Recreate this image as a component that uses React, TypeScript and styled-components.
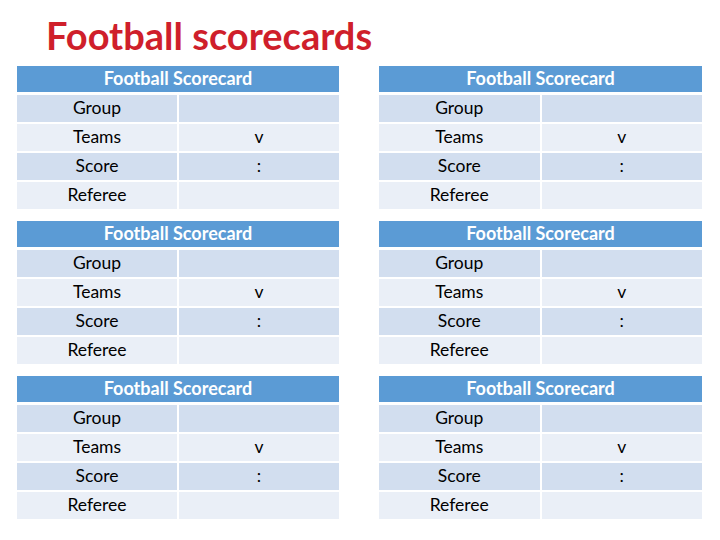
import React from "react";
import styled, { createGlobalStyle } from "styled-components";

const GlobalStyle = createGlobalStyle`
  html, body {
    margin: 0;
    padding: 0;
    background: #ffffff;
  }
  body {
    font-family: Lato, "Open Sans", "Liberation Sans", sans-serif;
    color: #000000;
  }
`;

const Page = styled.div`
  width: 720px;
  height: 540px;
  box-sizing: border-box;
  padding: 15px 0 0 17px;
`;

const Title = styled.h1`
  margin: 0 0 11px 29px;
  font-family: Lato, "Open Sans", sans-serif;
  font-weight: 700;
  font-size: 38px;
  line-height: 40px;
  color: #cf1f2b;
`;

const CardGrid = styled.div`
  display: grid;
  grid-template-columns: 322px 323px;
  column-gap: 40px;
  row-gap: 12px;
`;

const Card = styled.section`
  display: flex;
  flex-direction: column;
  gap: 2px;
`;

const CardHeader = styled.div`
  height: 26px;
  box-sizing: border-box;
  padding-bottom: 2px;
  margin-bottom: 1px;
  background: #5b9bd5;
  color: #ffffff;
  font-weight: 700;
  font-size: 18px;
  display: flex;
  align-items: center;
  justify-content: center;
`;

const Row = styled.div`
  display: grid;
  grid-template-columns: 1fr 1fr;
  column-gap: 2px;
  height: 27px;
`;

const Cell = styled.div<{ $shade: boolean }>`
  background: ${(p) => (p.$shade ? "#d2deef" : "#eaeff7")};
  display: flex;
  align-items: center;
  justify-content: center;
  box-sizing: border-box;
  padding-bottom: 2px;
  font-size: 17.5px;
`;

const rows: [string, string][] = [
  ["Group", ""],
  ["Teams", "v"],
  ["Score", ":"],
  ["Referee", ""],
];

function Scorecard() {
  return (
    <Card>
      <CardHeader>Football Scorecard</CardHeader>
      {rows.map(([label, value], i) => (
        <Row key={label}>
          <Cell $shade={i % 2 === 0}>{label}</Cell>
          <Cell $shade={i % 2 === 0}>{value}</Cell>
        </Row>
      ))}
    </Card>
  );
}

export default function App() {
  return (
    <>
      <GlobalStyle />
      <Page>
        <Title>Football scorecards</Title>
        <CardGrid>
          {Array.from({ length: 6 }).map((_, i) => (
            <Scorecard key={i} />
          ))}
        </CardGrid>
      </Page>
    </>
  );
}
